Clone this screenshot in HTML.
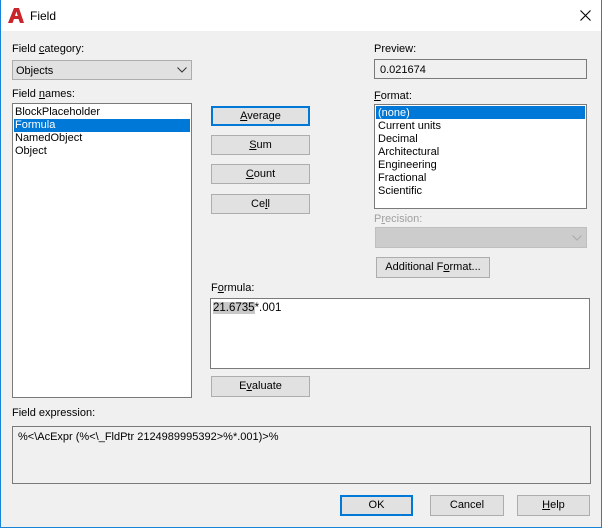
<!DOCTYPE html>
<html><head><style>
*{box-sizing:border-box;margin:0;padding:0}
body{width:602px;height:528px;position:relative;background:#f0f0f0;font-family:"Liberation Sans",sans-serif;font-size:11px;color:#000;overflow:hidden}
.a{position:absolute;white-space:nowrap}
.win{position:absolute;left:0;top:0;width:602px;height:528px;border:1px solid #1883d7;border-top:none}
.title{position:absolute;left:0;top:0;width:602px;height:31px;background:#fff}
.btn{position:absolute;background:#e1e1e1;border:1px solid #adadad;text-align:center;line-height:19px}
.btn.def{border:2px solid #0078d7;line-height:17px}
.box{position:absolute;border:1px solid #7a7a7a;background:#fff}
.sel{position:absolute;background:#0078d7;color:#fff}
u{text-decoration:underline}
</style></head><body>
<div class="title"></div>
<div class="win"></div>
<svg class="a" style="left:8px;top:8px" width="16" height="15" viewBox="0 0 16 15"><path d="M0 15 L6 0 L11 0 L16 15 L12 15 L10.5 11 L6 11 L4.5 15 Z M7 8 L9.8 8 L8.4 3.5 Z" fill="#c9252c"/></svg>
<div class="a" style="left:30px;top:9px;font-size:12px">Field</div>
<svg class="a" style="left:580px;top:10px" width="11" height="11"><path d="M0.5 0.5L10.5 10.5M10.5 0.5L0.5 10.5" stroke="#000" stroke-width="1.1"/></svg>

<div class="a" style="left:12px;top:43px">Field <u>c</u>ategory:</div>
<div class="a" style="left:12px;top:60px;width:180px;height:20px;background:#e1e1e1;border:1px solid #adadad"></div>
<div class="a" style="left:16px;top:65px">Objects</div>
<svg class="a" style="left:177px;top:67px" width="10" height="6"><path d="M0.5 0.5L5 5L9.5 0.5" stroke="#333" fill="none"/></svg>
<div class="a" style="left:12px;top:88px">Field <u>n</u>ames:</div>
<div class="box" style="left:12px;top:103px;width:180px;height:295px"></div>
<div class="sel" style="left:14px;top:119px;width:176px;height:13px"></div>
<div class="a" style="left:15px;top:106px;line-height:13px">BlockPlaceholder<br><span style="color:#fff">Formula</span><br>NamedObject<br>Object</div>

<div class="btn def" style="left:211px;top:106px;width:99px;height:20px"><u>A</u>verage</div>
<div class="btn" style="left:211px;top:135px;width:99px;height:20px"><u>S</u>um</div>
<div class="btn" style="left:211px;top:164px;width:99px;height:20px"><u>C</u>ount</div>
<div class="btn" style="left:211px;top:194px;width:99px;height:20px">Ce<u>l</u>l</div>

<div class="a" style="left:374px;top:43px">Preview:</div>
<div class="a" style="left:374px;top:59px;width:213px;height:20px;border:1px solid #7a7a7a;background:#f0f0f0"></div>
<div class="a" style="left:380px;top:64px">0.021674</div>
<div class="a" style="left:374px;top:90px"><u>F</u>ormat:</div>
<div class="box" style="left:374px;top:104px;width:213px;height:105px"></div>
<div class="sel" style="left:376px;top:106px;width:209px;height:13px"></div>
<div class="a" style="left:378px;top:107px;line-height:13px"><span style="color:#fff">(none)</span><br>Current units<br>Decimal<br>Architectural<br>Engineering<br>Fractional<br>Scientific</div>
<div class="a" style="left:374px;top:213px;color:#a0a0a0">P<u>r</u>ecision:</div>
<div class="a" style="left:375px;top:227px;width:212px;height:21px;background:#ccc;border:1px solid #bfbfbf"></div>
<svg class="a" style="left:572px;top:235px" width="10" height="6"><path d="M0.5 0.5L5 5L9.5 0.5" stroke="#aaa" fill="none"/></svg>
<div class="btn" style="left:376px;top:257px;width:114px;height:21px">Additional F<u>o</u>rmat...</div>

<div class="a" style="left:211px;top:282px">F<u>o</u>rmula:</div>
<div class="box" style="left:210px;top:298px;width:380px;height:71px"></div>
<div class="a" style="left:213px;top:302px;font-size:11.5px"><span style="background:#c8c8c8">21.6735</span>*.001</div>
<div class="btn" style="left:211px;top:376px;width:99px;height:21px">E<u>v</u>aluate</div>

<div class="a" style="left:12px;top:407px">Field expression:</div>
<div class="a" style="left:12px;top:426px;width:579px;height:58px;border:1px solid #7a7a7a"></div>
<div class="a" style="left:18px;top:431px">%&lt;\AcExpr (%&lt;\_FldPtr 2124989995392&gt;%*.001)&gt;%</div>

<div class="btn def" style="left:340px;top:495px;width:73px;height:21px;line-height:17px">OK</div>
<div class="btn" style="left:430px;top:495px;width:74px;height:21px">Cancel</div>
<div class="btn" style="left:517px;top:495px;width:73px;height:21px"><u>H</u>elp</div>
</body></html>
